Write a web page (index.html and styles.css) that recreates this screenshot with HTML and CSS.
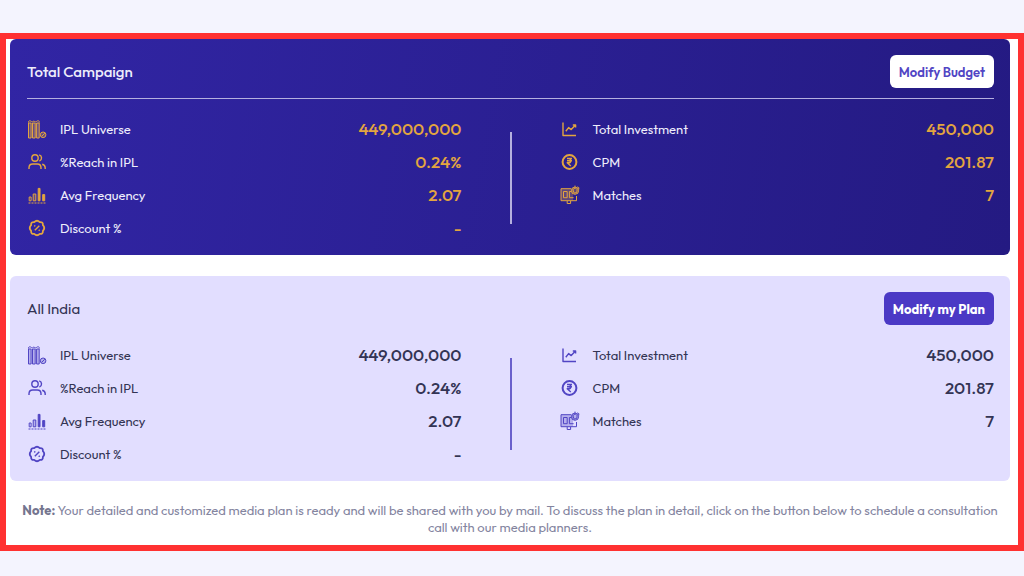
FILE: index.html
```html
<!DOCTYPE html>
<html lang="en">
<head>
<meta charset="utf-8">
<meta name="viewport" content="width=device-width, initial-scale=1">
<title>Media plan</title>
<link rel="stylesheet" href="styles.css">
</head>
<body>
<svg class="sprite" aria-hidden="true">
  <symbol id="stumps" viewBox="0 0 20 20">
    <path class="tint" d="M1.5 4h2.6v15H1.5zM5.5 4h2.7v15H5.5zM9.6 4h2.6v15H9.6z"/>
    <path d="M1.5 4h2.6v15H1.5zM5.5 4h2.7v15H5.5zM9.6 4h2.6v15H9.6zM1.6 3.6c-.8-1.8 1.5-2.4 2.6-1.2.9.9 1.5.4 2.7-.4 1.2.8 1.8 1.3 2.7.4 1.1-1.2 3.4-.6 2.6 1.2"/>
    <circle class="tint" cx="16.1" cy="15.8" r="2.8"/><circle cx="16.1" cy="15.8" r="2.8"/><path d="M14.6 17.4l3.2-3.2"/>
  </symbol>
  <symbol id="people" viewBox="0 0 20 20">
    <g class="bold"><circle cx="8" cy="6" r="3.2"/><path d="M2 17v-1.3c0-2.4 1.6-3.7 3.8-3.7h4.4c2.2 0 3.8 1.3 3.8 3.7V17M12.2 2.9a3.2 3.2 0 0 1 .2 6.1M15.2 12.2c1.9.4 3 1.7 3 3.6V17"/></g>
  </symbol>
  <symbol id="bars" viewBox="0 0 20 20">
    <path d="M2.2 12h1.9v3.8H2.2zM6.2 9h2.6v6.8H6.2z"/>
    <path class="tint" d="M6.2 9h2.6v6.8H6.2z"/>
    <path class="solid" d="M11.2 3.4h1.8v12.4h-1.8zM15.7 9.6h2v6.2h-2z"/>
    <path d="M1.5 18h17" stroke-dasharray="2 1"/>
  </symbol>
  <symbol id="discount" viewBox="0 0 20 20">
    <path class="rim" d="M7.2 4.1Q10 1.4 12.8 4.1Q16.2 3.8 15.9 7.2Q18.6 10 15.9 12.8Q16.2 16.2 12.8 15.9Q10 18.6 7.2 15.9Q3.8 16.2 4.1 12.8Q1.4 10 4.1 7.2Q3.8 3.8 7.2 4.1z"/>
    <path class="bold" d="M7.8 12.3l4.5-4.6"/><circle class="solid" cx="7.8" cy="7.9" r=".4"/><circle class="solid" cx="12.2" cy="12.2" r=".4"/>
  </symbol>
  <symbol id="chart" viewBox="0 0 20 20">
    <path class="bold" d="M3 3.5v13h13M5.8 12.2l2.8-3.6 2.6 2L15.5 6M12.8 6h2.8v2.6"/>
  </symbol>
  <symbol id="rupee" viewBox="0 0 20 20">
    <circle class="heavy" cx="9.5" cy="10" r="6.9"/><path class="bold" d="M7 6.5h5M7 8.8h5M7 6.5h1.5c3 0 3 4.3 0 4.3H7.2l3.6 3.2"/>
  </symbol>
  <symbol id="board" viewBox="0 0 20 20">
    <path class="tint" d="M1 3.7h12v12H1z"/>
    <path d="M11 3.7H1v12h15.5V11M3.5 6.5h3.7v6.2H3.5zM9.4 6.5v6.2h4.2M9.4 6.5h1.8M7.2 15.9v2.6h3.4v-2.6"/>
    <circle class="tint" cx="15" cy="5.7" r="3.6"/><circle cx="15" cy="5.7" r="3.6"/>
    <path d="M12.9 4.6l2.3-1.8 2 2-.5 2.7-2.6.6zM15 .6v1.5M17.3 1.8l1.5.8v1.8"/>
  </symbol>
</svg>

<main class="frame">
  <section class="card card-total">
    <header class="card-head ruled">
      <h2>Total Campaign</h2>
      <button type="button" class="btn btn-light">Modify Budget</button>
    </header>
    <div class="stats">
      <dl class="list">
        <div class="row"><svg class="icon"><use href="#stumps"/></svg><dt>IPL Universe</dt><dd>449,000,000</dd></div>
        <div class="row"><svg class="icon"><use href="#people"/></svg><dt>%Reach in IPL</dt><dd>0.24%</dd></div>
        <div class="row"><svg class="icon"><use href="#bars"/></svg><dt>Avg Frequency</dt><dd>2.07</dd></div>
        <div class="row"><svg class="icon"><use href="#discount"/></svg><dt>Discount %</dt><dd>-</dd></div>
      </dl>
      <div class="divider"></div>
      <dl class="list">
        <div class="row"><svg class="icon"><use href="#chart"/></svg><dt>Total Investment</dt><dd>450,000</dd></div>
        <div class="row"><svg class="icon"><use href="#rupee"/></svg><dt>CPM</dt><dd>201.87</dd></div>
        <div class="row"><svg class="icon"><use href="#board"/></svg><dt>Matches</dt><dd>7</dd></div>
      </dl>
    </div>
  </section>

  <section class="card card-region">
    <header class="card-head">
      <h2>All India</h2>
      <button type="button" class="btn btn-primary">Modify my Plan</button>
    </header>
    <div class="stats">
      <dl class="list">
        <div class="row"><svg class="icon"><use href="#stumps"/></svg><dt>IPL Universe</dt><dd>449,000,000</dd></div>
        <div class="row"><svg class="icon"><use href="#people"/></svg><dt>%Reach in IPL</dt><dd>0.24%</dd></div>
        <div class="row"><svg class="icon"><use href="#bars"/></svg><dt>Avg Frequency</dt><dd>2.07</dd></div>
        <div class="row"><svg class="icon"><use href="#discount"/></svg><dt>Discount %</dt><dd>-</dd></div>
      </dl>
      <div class="divider"></div>
      <dl class="list">
        <div class="row"><svg class="icon"><use href="#chart"/></svg><dt>Total Investment</dt><dd>450,000</dd></div>
        <div class="row"><svg class="icon"><use href="#rupee"/></svg><dt>CPM</dt><dd>201.87</dd></div>
        <div class="row"><svg class="icon"><use href="#board"/></svg><dt>Matches</dt><dd>7</dd></div>
      </dl>
    </div>
  </section>

  <p class="note"><strong>Note:</strong> Your detailed and customized media plan is ready and will be shared with you by mail. To discuss the plan in detail, click on the button below to schedule a consultation call with our media planners.</p>
</main>
</body>
</html>
```

FILE: styles.css
```css
* { box-sizing: border-box; }

body {
  margin: 0;
  padding: 33px 0 24px;
  background: #f4f4fe;
  color: #333454;
  font-family: Outfit, Lato, "Open Sans", sans-serif;
  font-size: 13px;
}

.sprite { position: absolute; width: 0; height: 0; }

.frame {
  border: 6px solid #ff3131;
  background: #fff;
  padding: 0 8px 9px 4px;
}

.card {
  border-radius: 6px;
  padding: 16px 16px 11px 17px;
}

.card-total {
  --accent: #e3a53f;
  --rule: #b5b0df;
  background: linear-gradient(100deg, #3125a4, #241a82);
  color: #eeedfb;
}

.card-region {
  --accent: #5145c4;
  --rule: #6a60cc;
  background: #e2deff;
  margin-top: 21px;
}

.card-head {
  display: flex;
  align-items: center;
  justify-content: space-between;
  padding-bottom: 13px;
}

.card-total .card-head { padding-bottom: 10px; }
.ruled { border-bottom: 1px solid var(--rule); margin-bottom: 13px; }

h2 { margin: 0; font-size: 15px; line-height: 20px; font-weight: 400; }
.card-total h2 { font-weight: 500; }

.btn {
  height: 33px;
  padding: 0 9px;
  border: 0;
  border-radius: 6px;
  font-family: inherit;
  font-size: 13px;
  line-height: 20px;
}

.btn-light { background: #fff; color: #5145c4; font-weight: 600; }
.btn-primary { background: #4b39c5; color: #fff; font-weight: 700; }

.stats {
  display: grid;
  grid-template-columns: 1fr 2px 1fr;
  column-gap: 48px;
}

.list { margin: 0; }
.row { display: flex; align-items: center; height: 33px; }
.divider { margin: 20px 0; background: var(--rule); }

.icon {
  width: 20px;
  height: 20px;
  margin-right: 13px;
  flex: none;
  fill: none;
  stroke: var(--accent);
  stroke-width: 1;
  stroke-linejoin: round;
}

.bold { stroke-width: 1.4; }
.rim { stroke-width: 1.8; }
.heavy { stroke-width: 2; }
.solid { fill: var(--accent); }
.tint { fill: var(--accent); fill-opacity: .3; stroke: none; }

dt { flex: 1; }
dd { margin: 0; font-size: 17px; font-weight: 500; }
.card-total dd { color: var(--accent); }

.note {
  margin: 21px 0 0;
  padding: 0 8px;
  text-align: center;
  line-height: 17px;
  color: #84859f;
}
.note strong { color: #74758f; }
```
